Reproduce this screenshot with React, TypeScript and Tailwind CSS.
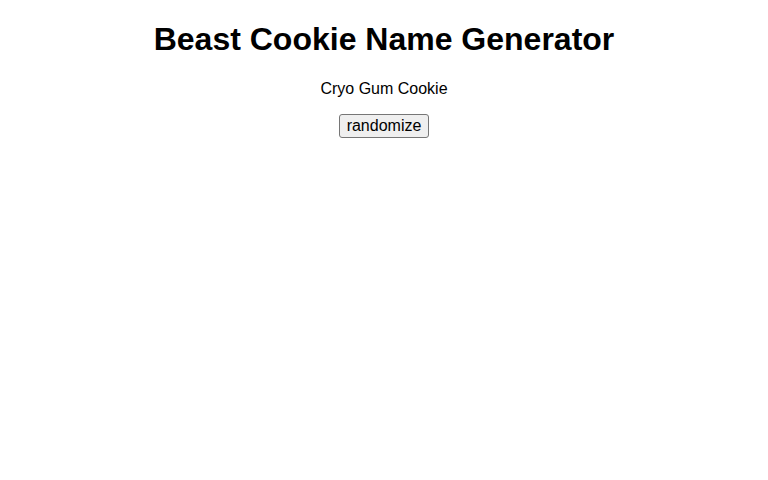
import React, { useState } from "react";

const names = ["Cryo Gum Cookie"];

export default function App() {
  const [name] = useState(names[0]);
  return (
    <div className="text-center text-black bg-white" style={{ fontFamily: '"Liberation Sans", Arial, sans-serif' }}>
      <h1 className="text-[32px] font-bold leading-[37px] pt-[21px] mb-[22px]">Beast Cookie Name Generator</h1>
      <p className="text-[16px] leading-[18px] mb-[16px]">{name}</p>
      <button className="text-[16px] leading-[18px] px-[7px] py-[2px] bg-[#efefef] border border-[#767676] rounded-[3px]">
        randomize
      </button>
    </div>
  );
}
